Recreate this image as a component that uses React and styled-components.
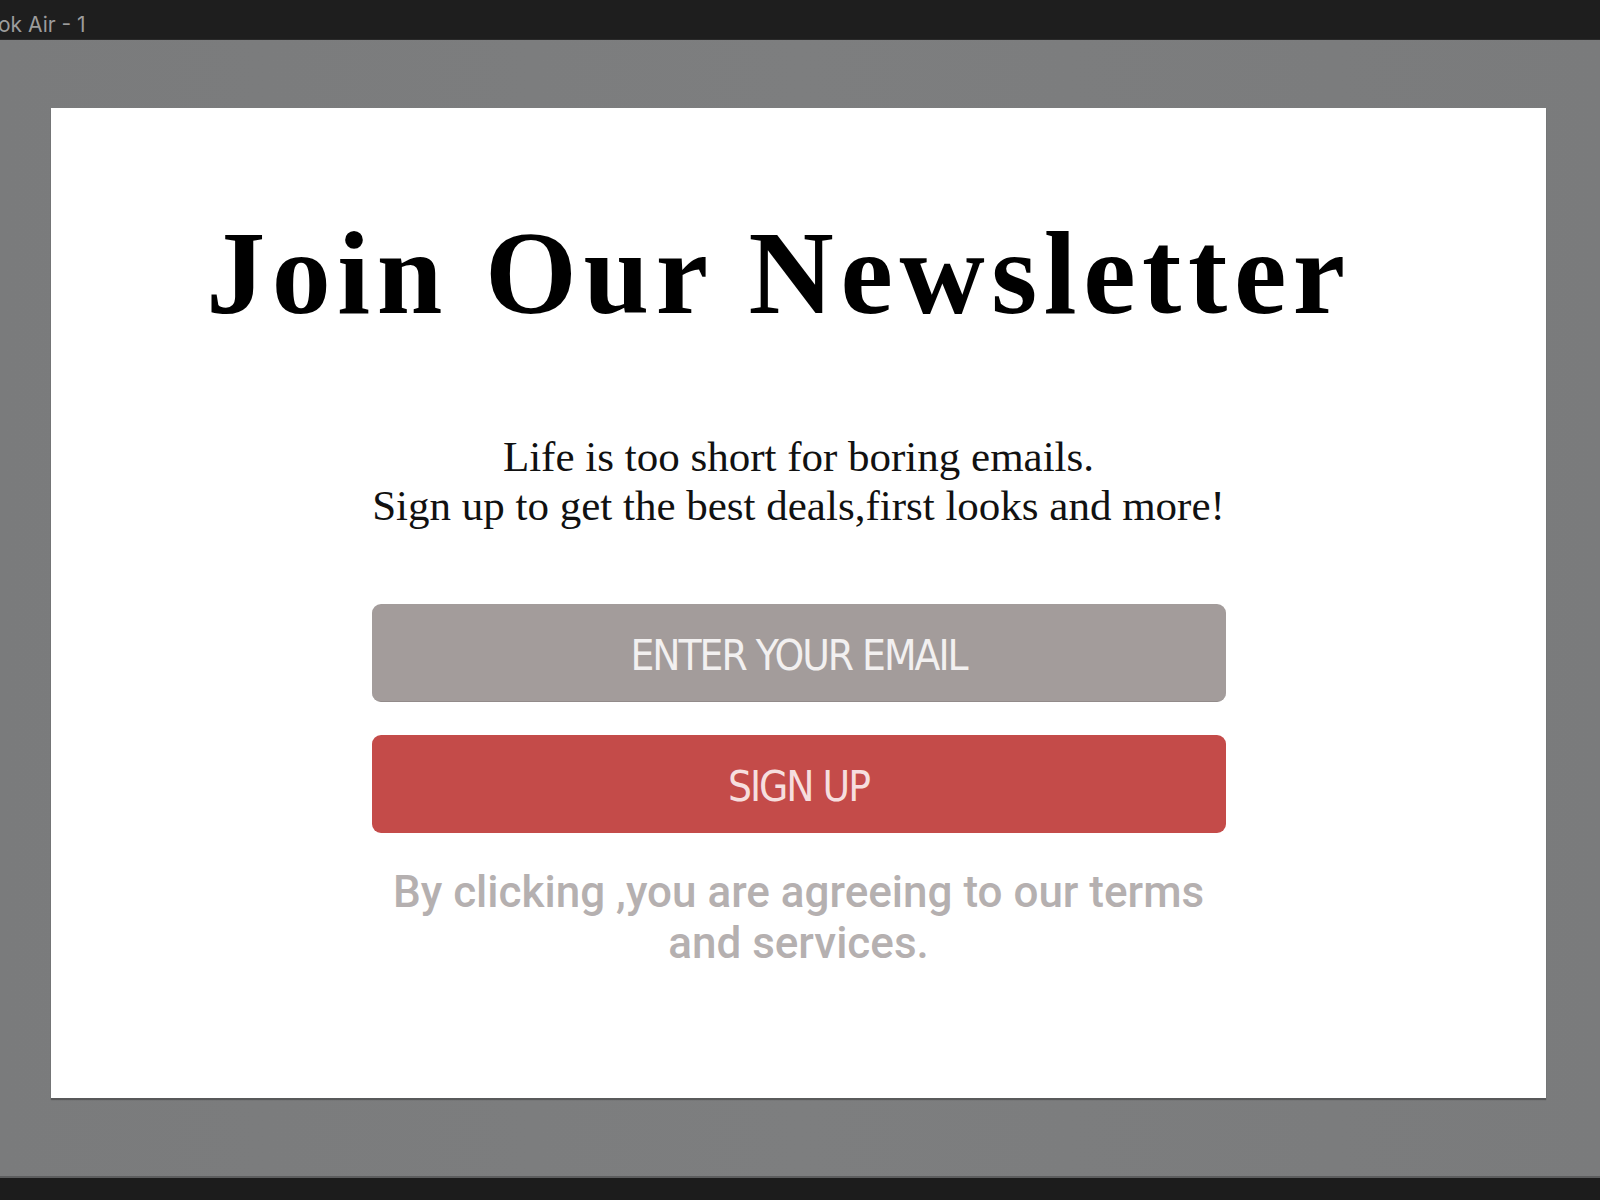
import React, { useState } from "react";
import styled, { createGlobalStyle } from "styled-components";

const GlobalStyle = createGlobalStyle`
  * {
    box-sizing: border-box;
  }
  html,
  body {
    margin: 0;
    padding: 0;
    background: #7b7c7d;
  }
`;

const Screen = styled.div`
  display: flex;
  flex-direction: column;
  width: 100vw;
  height: 1200px;
  overflow: hidden;
`;

const TopBar = styled.div`
  height: 40px;
  flex: none;
  display: flex;
  align-items: flex-end;
  background: #1e1e1e;
  border-bottom: 1px solid #2a2a2a;

  span {
    margin-left: -2px;
    padding-bottom: 1px;
    font-family: Inter, "Noto Sans", sans-serif;
    font-size: 21px;
    line-height: 26px;
    color: #9c9c9c;
    white-space: nowrap;
  }
`;

const Canvas = styled.div`
  flex: 1;
  padding: 68px 54px 0 51px;
  background: linear-gradient(90deg, #7a7b7c 0%, #7d7e7f 50%, #7a7b7c 100%);
`;

const BottomBar = styled.div`
  height: 24px;
  flex: none;
  background: #1c1c1c;
  border-top: 2px solid #5c5d5e;
`;

const Card = styled.div`
  height: 990px;
  display: flex;
  flex-direction: column;
  align-items: center;
  padding-top: 107px;
  background: #ffffff;
  box-shadow: 0 2px 1px rgba(0, 0, 0, 0.28);
`;

const Heading = styled.h1`
  margin: 0 39px 0 0;
  font-family: "Liberation Serif", "DejaVu Serif", serif;
  font-weight: 700;
  font-size: 118px;
  line-height: 118px;
  letter-spacing: 6.6px;
  color: #000000;
`;

const Tagline = styled.p`
  margin: 99px 0 0;
  font-family: "Liberation Serif", "DejaVu Serif", serif;
  font-size: 43px;
  line-height: 49px;
  text-align: center;
  color: #111111;
`;

const Form = styled.form`
  width: 854px;
  margin-top: 74px;
  display: flex;
  flex-direction: column;
  gap: 33px;
`;

const field = `
  width: 100%;
  height: 98px;
  padding: 5px 0 0;
  border: none;
  border-radius: 9px;
  font-family: "Liberation Sans Narrow", "DejaVu Sans Condensed", "Liberation Sans", sans-serif;
  font-size: 42px;
  letter-spacing: -2px;
  text-align: center;
  outline: none;
`;

const EmailInput = styled.input`
  ${field}
  background: #a39c9b;
  color: #f2f0f0;
  border-bottom: 1px solid #928b8a;

  &::placeholder {
    color: #f2f0f0;
    opacity: 1;
  }
`;

const SignUpButton = styled.button`
  ${field}
  background: ${(p) => p.$color};
  color: #f6dede;
  cursor: pointer;
`;

const Terms = styled.p`
  width: 820px;
  margin: 34px 0 0;
  font-family: Roboto, "Liberation Sans", sans-serif;
  font-weight: 500;
  font-size: 44px;
  line-height: 51px;
  text-align: center;
  color: #b5b0b0;
`;

const App = () => {
  const [email, setEmail] = useState("");

  const submit = (e) => {
    e.preventDefault();
    setEmail("");
  };

  return (
    <>
      <GlobalStyle />
      <Screen>
        <TopBar>
          <span>ok Air - 1</span>
        </TopBar>
        <Canvas>
          <Card>
            <Heading>Join Our Newsletter</Heading>
            <Tagline>
              Life is too short for boring emails.
              <br />
              Sign up to get the best deals,first looks and more!
            </Tagline>
            <Form onSubmit={submit}>
              <EmailInput
                type="email"
                placeholder="ENTER YOUR EMAIL"
                value={email}
                onChange={(e) => setEmail(e.target.value)}
              />
              <SignUpButton type="submit" $color="#c44b49">
                SIGN UP
              </SignUpButton>
            </Form>
            <Terms>By clicking ,you are agreeing to our terms and services.</Terms>
          </Card>
        </Canvas>
        <BottomBar />
      </Screen>
    </>
  );
};

export default App;
